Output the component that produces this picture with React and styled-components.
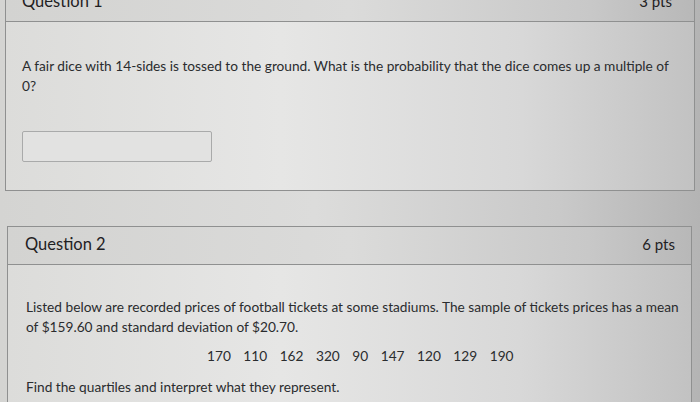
import React from 'react';
import styled, { createGlobalStyle } from 'styled-components';

const GlobalStyle = createGlobalStyle`
  html, body {
    margin: 0;
    padding: 0;
    width: 700px;
    height: 402px;
    overflow: hidden;
    background: linear-gradient(90deg, #d4d4d2 0%, #dcdcdb 45%, #c9c9c9 80%, #b4b4b4 100%);
    font-family: Lato, "Open Sans", sans-serif;
    color: #2a2c2e;
  }
`;

const Page = styled.div`
  display: flex;
  flex-direction: column;
  gap: 35px;
  margin-top: -17px;
`;

const Card = styled.section`
  margin-left: ${(p) => p.$left}px;
  width: ${(p) => p.$width}px;
  border: 1px solid #8f9090;
  box-sizing: border-box;
`;

const Header = styled.header`
  height: 38px;
  box-sizing: border-box;
  display: flex;
  align-items: center;
  justify-content: space-between;
  padding: 0 ${(p) => p.$right}px 3px ${(p) => p.$left}px;
  background: linear-gradient(90deg, #d3d3d1 0%, #dbdbda 50%, #c8c8c8 85%, #b8b8b8 100%);
  border-bottom: 1px solid #8f9090;
  font-size: 16.5px;
  color: #1f2123;
`;

const Pts = styled.span`
  font-size: 15px;
`;

const Body = styled.div`
  height: ${(p) => p.$height}px;
  box-sizing: border-box;
  padding: ${(p) => p.$top}px 10px 0 ${(p) => p.$left}px;
  background: linear-gradient(90deg, #dcdcda 0%, #e6e6e5 40%, #d8d8d8 75%, #c2c2c2 100%);
  font-size: 13.7px;
  line-height: 20px;
`;

const Text = styled.p`
  margin: 0;
  width: ${(p) => p.$width}px;
`;

const AnswerInput = styled.div`
  margin-top: 35px;
  width: 190px;
  height: 31px;
  box-sizing: border-box;
  border: 1px solid #a9aaaa;
  border-radius: 2px;
  background: #e2e2e1;
`;

const Numbers = styled.div`
  display: flex;
  gap: 12.5px;
  margin: 9px 0 0 181px;
`;

const Find = styled.p`
  margin: 11px 0 0;
`;

export default function App() {
  return (
    <>
      <GlobalStyle />
      <Page>
        <Card $left={5} $width={690}>
          <Header $left={16} $right={22}>
            <span>Question 1</span>
            <Pts>3 pts</Pts>
          </Header>
          <Body $height={168} $top={34} $left={16}>
            <Text $width={655}>
              A fair dice with 14-sides is tossed to the ground. What is the probability that the dice comes up a multiple of 0?
            </Text>
            <AnswerInput />
          </Body>
        </Card>
        <Card $left={7} $width={685}>
          <Header $left={17} $right={16}>
            <span>Question 2</span>
            <Pts>6 pts</Pts>
          </Header>
          <Body $height={150} $top={32} $left={18}>
            <Text $width={655}>
              Listed below are recorded prices of football tickets at some stadiums. The sample of tickets prices has a mean of $159.60 and standard deviation of $20.70.
            </Text>
            <Numbers>
              {[170, 110, 162, 320, 90, 147, 120, 129, 190].map((n, i) => (
                <span key={i}>{n}</span>
              ))}
            </Numbers>
            <Find>Find the quartiles and interpret what they represent.</Find>
          </Body>
        </Card>
      </Page>
    </>
  );
}
